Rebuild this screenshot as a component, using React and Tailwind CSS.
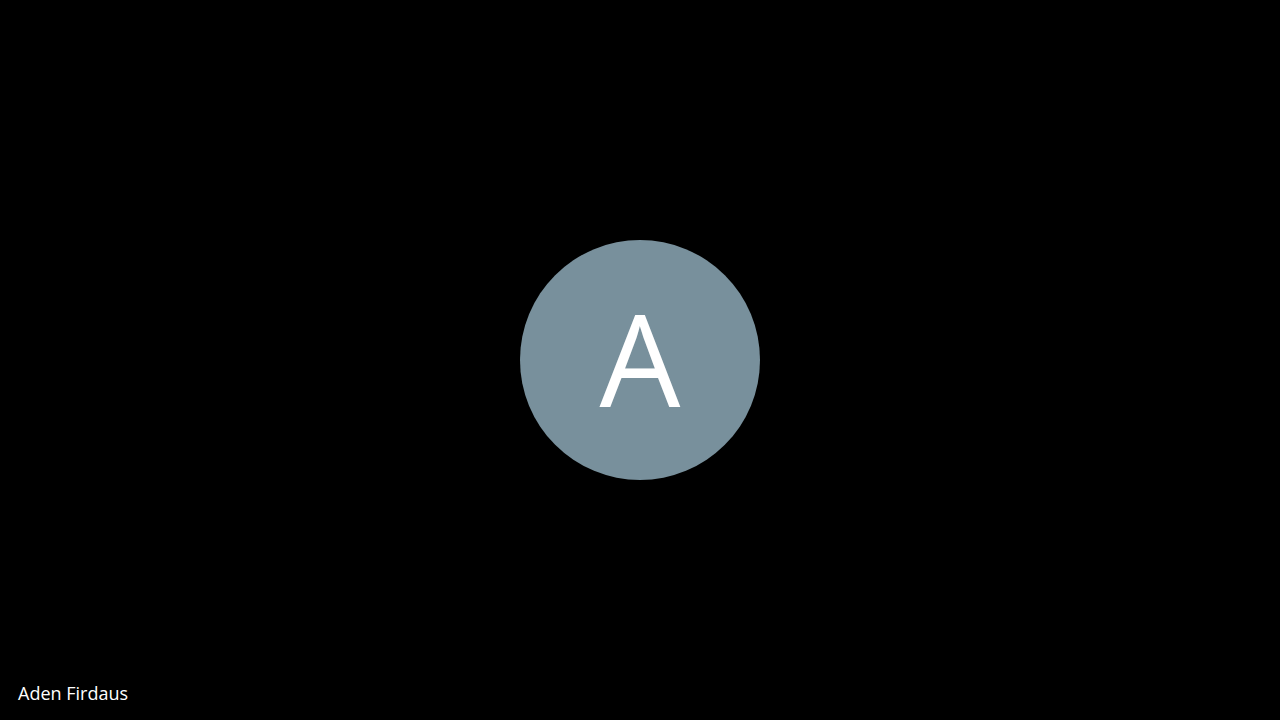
export default function App() {
  return (
    <div
      className="flex h-screen w-full flex-col bg-black text-white"
      style={{ fontFamily: '"Open Sans", "Noto Sans", sans-serif' }}
    >
      {/* Tile */}
      <div className="flex flex-1 items-center justify-center pt-[40px]">
        <div className="flex h-[240px] w-[240px] items-center justify-center rounded-full bg-[#78909c]">
          <span className="mb-[4px] text-[128px] leading-none">A</span>
        </div>
      </div>

      {/* Name */}
      <div className="h-[40px] px-[18px] pt-[1px] pb-[15px]">
        <span className="text-[18px] leading-[24px]">Aden Firdaus</span>
      </div>
    </div>
  );
}
